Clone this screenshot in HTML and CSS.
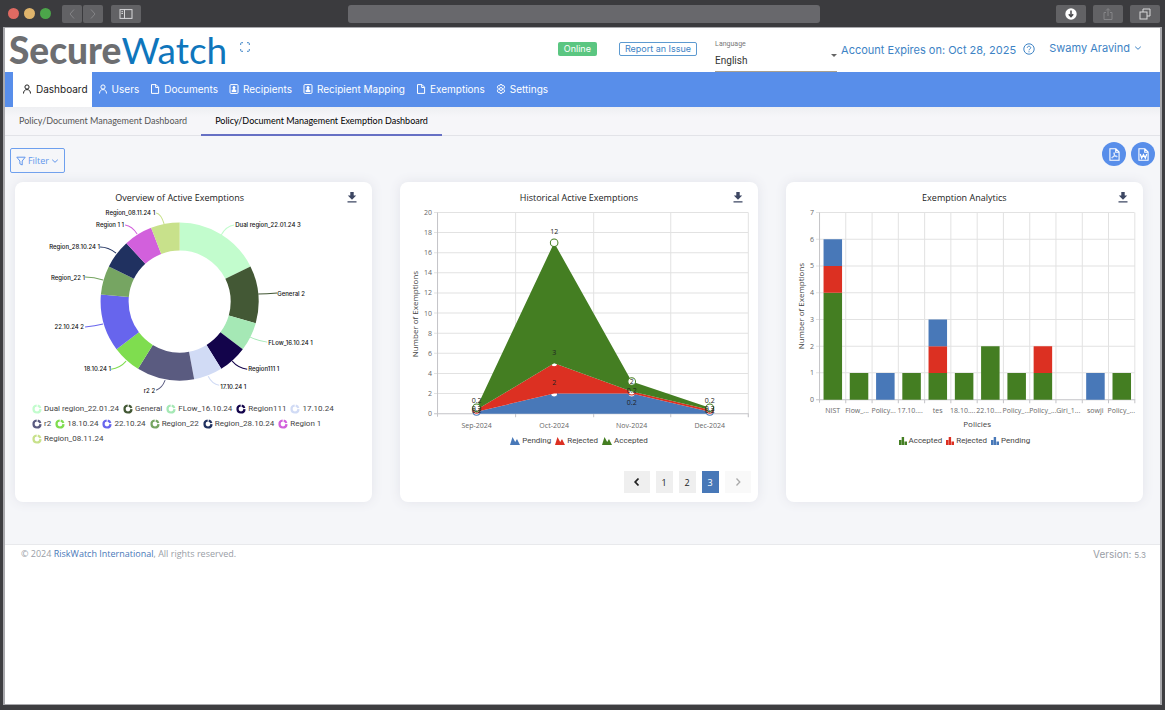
FILE: index.html
```html
<!DOCTYPE html>
<html lang="en">
<head>
<meta charset="utf-8">
<meta name="viewport" content="width=device-width, initial-scale=1">
<title>SecureWatch - Exemption Dashboard</title>
<link rel="stylesheet" href="styles.css">
</head>
<body>
<svg class="defs" width="0" height="0" aria-hidden="true">
  <defs>
    <symbol id="user" viewBox="0 0 10 10"><circle cx="5" cy="3" r="2.1"/><path d="M1.5 9.5c0-2.400 1.300-3.900 3.500-3.900s3.500 1.500 3.500 3.900"/></symbol>
    <symbol id="file" viewBox="0 0 10 10"><path d="M1.500.6h4.500l2.600 2.600v6.200h-7.100zM5.700.8v2.700h2.700"/></symbol>
    <symbol id="badge" viewBox="0 0 10 10"><rect x="1" y=".6" width="8" height="8.800" rx="1"/><circle cx="5" cy="3.600" r="1.100" fill="currentColor"/><path d="M3 7.500c0-1.300.700-2 2-2s2 .700 2 2z" fill="currentColor"/></symbol>
    <symbol id="gear" viewBox="0 0 10 10"><path d="M4 .6h2l.4 1.300 1.300-.4 1 1.600-.8 1.100v1.600l.8 1.100-1 1.600-1.300-.4L6 9.400H4l-.4-1.300-1.300.4-1-1.600.8-1.100V4.200l-.8-1.100 1-1.600 1.300.4z"/><circle cx="5" cy="5" r="1.500"/></symbol>
    <symbol id="down" viewBox="0 0 8 8"><path d="M1.200 2.700 4 5.300l2.800-2.600"/></symbol>
    <symbol id="save" viewBox="0 0 10 11"><path d="M3.300 0h3.400v3.400H9.200L5 7.800.8 3.400h2.500zM.5 9.300h9v1.200h-9z" fill="#3d4763" stroke="none"/></symbol>
    <symbol id="ring" viewBox="0 0 10 10"><path d="M5.700 1.550A3.500 3.500 0 0 1 8.350 4M8.500 5.100A3.500 3.500 0 1 1 4.700 1.500" fill="none" stroke="currentColor" stroke-width="2.200"/></symbol>
    <symbol id="area" viewBox="0 0 10 8"><path d="M0 8 2.500 0 5.200 5 7 2 10 8z" fill="currentColor"/></symbol>
    <symbol id="bars" viewBox="0 0 8 8"><path d="M0 3h2.400v5H0zM2.700 0h2.400v8H2.700zM5.500 4.500H8V8H5.500z" fill="currentColor"/></symbol>
  </defs>
</svg>

<div class="toolbar">
  <div class="tools">
    <span class="dots"><i class="dot red"></i><i class="dot amber"></i><i class="dot green"></i></span>
    <span class="pair">
      <button class="tool small dim" aria-label="Back"><svg class="icon" viewBox="0 0 10 10"><path d="M7 .5 3 5l4 4.500"/></svg></button>
      <button class="tool small dim" aria-label="Forward"><svg class="icon" viewBox="0 0 10 10"><path d="M3 .5 7 5 3 9.500"/></svg></button>
    </span>
    <button class="tool" aria-label="Sidebar"><svg class="icon wide" viewBox="0 0 14 10"><rect x="1" y=".6" width="12" height="8.800"/><path d="M5.500.6v8.800M2.400 2.700h1.600M2.400 4.500h1.600"/></svg></button>
  </div>
  <input class="address" type="text" aria-label="Address">
  <div class="tools end">
    <button class="tool" aria-label="Downloads"><svg class="icon big" viewBox="0 0 12 12"><circle cx="6" cy="6" r="5.700" fill="#fff" stroke="none"/><path d="M6 2.500v6M3.800 6.200 6 8.600l2.200-2.400" stroke="#4a4a4e" stroke-width="1.500"/></svg></button>
    <button class="tool dim" aria-label="Share"><svg class="icon big" viewBox="0 0 12 12"><path d="M4 4.500H2v7h8v-7H8M6 8V.8M4 2.600 6 .6l2 2"/></svg></button>
    <button class="tool" aria-label="Tabs"><svg class="icon big" viewBox="0 0 12 12"><rect x="1" y="4" width="7" height="7"/><path d="M4 4V1h7v7H8"/></svg></button>
  </div>
</div>

<div class="page">
  <header class="header">
    <a class="logo" href="#">Secure<span>Watch</span></a>
    <button class="plain expand" aria-label="Full screen"><svg class="icon" viewBox="0 0 10 10"><path d="M.7 3V1.500q0-.8.8-.8H3M7 .7h1.500q.8 0 .8.800V3M9.300 7v1.500q0 .8-.8.800H7M3 9.300H1.500q-.8 0-.8-.8V7"/></svg></button>
    <span class="online">Online</span>
    <button class="report">Report an Issue</button>
    <div class="language">
      <label for="lang">Language</label>
      <div class="pick"><select id="lang"><option>English</option></select></div>
    </div>
    <span class="expires">Account Expires on: Oct 28, 2025</span>
    <button class="plain help" aria-label="Help"><svg class="icon help-icon" viewBox="0 0 12 12"><circle cx="6" cy="6" r="5.200"/><path d="M4.300 4.800c0-2.200 3.400-2 3.400 0 0 1.100-1.700 1.200-1.700 2.500M6 8.300v1"/></svg></button>
    <button class="plain account">Swamy Aravind <svg class="icon chev"><use href="#down"/></svg></button>
  </header>

  <nav class="nav">
    <a class="on" href="#"><svg class="icon"><use href="#user"/></svg>Dashboard</a>
    <a href="#"><svg class="icon"><use href="#user"/></svg>Users</a>
    <a href="#"><svg class="icon"><use href="#file"/></svg>Documents</a>
    <a href="#"><svg class="icon"><use href="#badge"/></svg>Recipients</a>
    <a href="#"><svg class="icon"><use href="#badge"/></svg>Recipient Mapping</a>
    <a href="#"><svg class="icon"><use href="#file"/></svg>Exemptions</a>
    <a href="#"><svg class="icon"><use href="#gear"/></svg>Settings</a>
  </nav>

  <nav class="tabs">
    <a href="#">Policy/Document Management Dashboard</a>
    <a class="on" href="#">Policy/Document Management Exemption Dashboard</a>
  </nav>

  <main class="main">
    <div class="actions">
      <button class="filter"><svg class="icon" viewBox="0 0 10 10"><path d="M.8 1.200h8.400L6.200 5v4L3.900 7.800V5z"/></svg>Filter<svg class="icon chev"><use href="#down"/></svg></button>
      <div class="exports">
        <button aria-label="Export PDF"><svg class="doc" viewBox="0 0 12 14"><path d="M1 .8h6.500L11 4.300v8.900H1zM7.300 1v3.500h3.500"/><path d="M5.500 5c.9 0 .5 2.500-.3 4-.6 1.200-1.700 2.300-2.200 1.800-.5-.6 1.500-1.700 3-2 1.300-.3 3-.3 3 .4 0 .8-1.700.1-2.500-.8C5.600 7.400 4.800 5 5.500 5z" stroke-width=".9"/></svg></button>
        <button aria-label="Export Word"><svg class="doc" viewBox="0 0 12 14"><path d="M1 .8h6.500L11 4.300v8.900H1zM7.300 1v3.500h3.500"/><path d="M2.500 6.500 4 11 6 7.200 8 11l1.500-4.500" stroke-width="1.400"/></svg></button>
      </div>
    </div>

    <div class="cards">
      <section class="card">
        <div class="head"><h2 class="lead">Overview of Active Exemptions</h2><button class="plain save" aria-label="Download"><svg><use href="#save"/></svg></button></div>
        <svg class="chart" viewBox="0 0 357 190" role="img" aria-label="Overview of Active Exemptions">
          <g transform="rotate(-90 164.500 95.500)" fill="none" stroke-width="28">
            <circle cx="164.500" cy="95.500" r="65" pathLength="17" stroke="#c2fccd" stroke-dasharray="3 14"/>
            <circle cx="164.500" cy="95.500" r="65" pathLength="17" stroke="#435835" stroke-dasharray="2 15" stroke-dashoffset="-3"/>
            <circle cx="164.500" cy="95.500" r="65" pathLength="17" stroke="#a5e8b5" stroke-dasharray="1 16" stroke-dashoffset="-5"/>
            <circle cx="164.500" cy="95.500" r="65" pathLength="17" stroke="#13044b" stroke-dasharray="1 16" stroke-dashoffset="-6"/>
            <circle cx="164.500" cy="95.500" r="65" pathLength="17" stroke="#d1dbf5" stroke-dasharray="1 16" stroke-dashoffset="-7"/>
            <circle cx="164.500" cy="95.500" r="65" pathLength="17" stroke="#5a5b80" stroke-dasharray="2 15" stroke-dashoffset="-8"/>
            <circle cx="164.500" cy="95.500" r="65" pathLength="17" stroke="#7fdd4f" stroke-dasharray="1 16" stroke-dashoffset="-10"/>
            <circle cx="164.500" cy="95.500" r="65" pathLength="17" stroke="#6765ed" stroke-dasharray="2 15" stroke-dashoffset="-11"/>
            <circle cx="164.500" cy="95.500" r="65" pathLength="17" stroke="#76a562" stroke-dasharray="1 16" stroke-dashoffset="-13"/>
            <circle cx="164.500" cy="95.500" r="65" pathLength="17" stroke="#203160" stroke-dasharray="1 16" stroke-dashoffset="-14"/>
            <circle cx="164.500" cy="95.500" r="65" pathLength="17" stroke="#d260dc" stroke-dasharray="1 16" stroke-dashoffset="-15"/>
            <circle cx="164.500" cy="95.500" r="65" pathLength="17" stroke="#c8e18b" stroke-dasharray="1 16" stroke-dashoffset="-16"/>
          </g>
          <g fill="none" stroke-width="1">
            <path d="M206 29q5-9 13-10" stroke="#c2fccd"/><path d="M243 88q8 0 19-1" stroke="#435835"/>
            <path d="M235 131q8 4 17 5" stroke="#a5e8b5"/><path d="M217 155q6 7 15 8" stroke="#13044b"/>
            <path d="M193 170q4 8 11 9" stroke="#d1dbf5"/><path d="M150 174q-3 8-9 10" stroke="#5a5b80"/>
            <path d="M111 155q-6 7-15 8" stroke="#7fdd4f"/><path d="M88 118q-8 2-18 3" stroke="#6765ed"/>
            <path d="M88 74q-9-3-18-3" stroke="#76a562"/><path d="M101 47q-8-6-16-6" stroke="#203160"/>
            <path d="M122 28q-5-8-12-9" stroke="#d260dc"/><path d="M149 18q-3-10-8-11" stroke="#c8e18b"/>
          </g>
          <g class="callout">
            <text x="220" y="21">Dual region_22.01.24 3</text><text x="262" y="90">General 2</text>
            <text x="253" y="139">FLow_16.10.24 1</text><text x="233" y="165">Region111 1</text>
            <text x="205" y="183">17.10.24 1</text>
            <g text-anchor="end">
              <text x="140" y="187">r2 2</text><text x="96" y="165">18.10.24 1</text><text x="69" y="123">22.10.24 2</text>
              <text x="70" y="74">Region_22 1</text><text x="85" y="43">Region_28.10.24 1</text>
              <text x="109" y="21">Region 1 1</text><text x="140" y="9">Region_08.11.24 1</text>
            </g>
          </g>
        </svg>
        <ul class="legend left">
          <li><svg color="#c2fccd"><use href="#ring"/></svg>Dual region_22.01.24</li>
          <li><svg color="#435835"><use href="#ring"/></svg>General</li>
          <li><svg color="#a5e8b5"><use href="#ring"/></svg>FLow_16.10.24</li>
          <li><svg color="#13044b"><use href="#ring"/></svg>Region111</li>
          <li><svg color="#d1dbf5"><use href="#ring"/></svg>17.10.24</li>
          <li><svg color="#5a5b80"><use href="#ring"/></svg>r2</li>
          <li><svg color="#7fdd4f"><use href="#ring"/></svg>18.10.24</li>
          <li><svg color="#6765ed"><use href="#ring"/></svg>22.10.24</li>
          <li><svg color="#76a562"><use href="#ring"/></svg>Region_22</li>
          <li><svg color="#203160"><use href="#ring"/></svg>Region_28.10.24</li>
          <li><svg color="#d260dc"><use href="#ring"/></svg>Region 1</li>
          <li><svg color="#c8e18b"><use href="#ring"/></svg>Region_08.11.24</li>
        </ul>
      </section>

      <section class="card">
        <div class="head"><h2>Historical Active Exemptions</h2><button class="plain save" aria-label="Download"><svg><use href="#save"/></svg></button></div>
        <svg class="chart" viewBox="0 0 357 226" role="img" aria-label="Historical Active Exemptions">
          <path class="grid" d="M34 6.500h314M34 26.600h314M34 46.700h314M34 66.800h314M34 86.900h314M34 107h314M34 127.100h314M34 147.200h314M34 167.300h314M34 187.400h314M115.500 6.500v201M193.500 6.500v201M270.500 6.500v201M348 6.500v204"/>
          <path class="axis" d="M37.500 6.500v204M34 207.500h314M115.500 207v4M193.500 207v4M270.500 207v4M348 207v4"/>
          <path d="M76.500 205.500 154 187.400h77.500l78 18.100v2h-233z" fill="#4878b8"/>
          <g class="marks" stroke="#4878b8"><circle cx="76.500" cy="205.500" r="3.500"/><circle cx="154" cy="187.400" r="3.500"/><circle cx="231.500" cy="187.400" r="3.500"/><circle cx="309.500" cy="205.500" r="3.500"/></g>
          <path d="M76.500 203.500 154 157.200l77.500 28.200 78 18.100v2l-78-18.100H154l-77.500 18.100z" fill="#dc3022"/>
          <g class="marks" stroke="#dc3022"><circle cx="76.500" cy="203.500" r="3.500"/><circle cx="154" cy="157.200" r="3.500"/><circle cx="231.500" cy="185.400" r="3.500"/><circle cx="309.500" cy="203.500" r="3.500"/></g>
          <path d="M76.500 201.500 154 36.700l77.500 138.700 78 26.100v2l-78-18.100-77.500-28.200-77.500 46.300z" fill="#447e22"/>
          <g class="marks" stroke="#447e22"><circle cx="76.500" cy="201.500" r="3.800"/><circle cx="154" cy="36.700" r="3.800"/><circle cx="231.500" cy="175.400" r="3.800"/><circle cx="309.500" cy="201.500" r="3.800"/></g>
          <g class="values">
            <text x="76.500" y="197">0.2</text><text x="76.500" y="205">0.2</text><text x="76.500" y="207">0.2</text>
            <text x="154" y="28">12</text><text x="154" y="149">3</text><text x="154" y="179">2</text>
            <text x="231.500" y="178">2</text><text x="231.500" y="187">0.2</text><text x="231.500" y="199">0.2</text>
            <text x="309.500" y="197">0.2</text><text x="309.500" y="205">0.2</text><text x="309.500" y="207">0.2</text>
          </g>
          <g class="ticks" text-anchor="end">
            <text x="32" y="9">20</text><text x="32" y="29">18</text><text x="32" y="49">16</text><text x="32" y="69">14</text><text x="32" y="89">12</text><text x="32" y="110">10</text><text x="32" y="130">8</text><text x="32" y="150">6</text><text x="32" y="170">4</text><text x="32" y="190">2</text><text x="32" y="210">0</text>
          </g>
          <g class="ticks" text-anchor="middle"><text x="76.500" y="222">Sep-2024</text><text x="154" y="222">Oct-2024</text><text x="231.500" y="222">Nov-2024</text><text x="309.500" y="222">Dec-2024</text></g>
          <text class="name" transform="translate(18 108) rotate(-90)">Number of Exemptions</text>
        </svg>
        <ul class="legend">
          <li><svg class="wide" color="#4878b8"><use href="#area"/></svg>Pending</li>
          <li><svg class="wide" color="#dc3022"><use href="#area"/></svg>Rejected</li>
          <li><svg class="wide" color="#447e22"><use href="#area"/></svg>Accepted</li>
        </ul>
        <div class="pager">
          <button class="step" aria-label="Previous"><svg class="icon" viewBox="0 0 10 10"><path d="M6.500 1.500 3.200 5l3.300 3.500" stroke-width="1.800"/></svg></button>
          <button>1</button><button>2</button><button class="on">3</button>
          <button class="step off" aria-label="Next" disabled><svg class="icon" viewBox="0 0 10 10"><path d="M3.500 1.500 6.800 5 3.500 8.500" stroke-width="1.300"/></svg></button>
        </div>
      </section>

      <section class="card">
        <div class="head"><h2>Exemption Analytics</h2><button class="plain save" aria-label="Download"><svg><use href="#save"/></svg></button></div>
        <svg class="chart" viewBox="0 0 357 226" role="img" aria-label="Exemption Analytics">
          <path class="grid" d="M30 6.500h318M30 33.200h318M30 59.900h318M30 86.600h318M30 113.300h318M30 140h318M30 166.700h318M59.700 6.500v187M86 6.500v187M112.200 6.500v187M138.500 6.500v187M164.700 6.500v187M191 6.500v187M217.200 6.500v187M243.500 6.500v187M269.700 6.500v187M296 6.500v187M322.200 6.500v187M348.500 6.500v187"/>
          <path class="axis" d="M33.500 6.500v190M30 193.500h318M59.700 193v4M86 193v4M112.200 193v4M138.500 193v4M164.700 193v4M191 193v4M217.200 193v4M243.500 193v4M269.700 193v4M296 193v4M322.200 193v4M348.500 193v4"/>
          <path fill="#447e22" d="M37.500 86.600h18.500v106.900H37.500zM63.700 166.800h18.500v26.700H63.700zM116.200 166.800h18.500v26.700h-18.500zM142.400 166.800h18.500v26.700h-18.500zM168.700 166.800h18.500v26.700h-18.500zM194.900 140h18.500v53.500h-18.500zM221.200 166.800h18.500v26.700h-18.500zM247.400 166.800h18.500v26.700h-18.500zM326.200 166.800h18.500v26.700h-18.500z"/>
          <path fill="#dc3022" d="M37.500 59.900h18.500v26.700H37.500zM142.400 140h18.500v26.800h-18.500zM247.400 140h18.500v26.800h-18.500z"/>
          <path fill="#4878b8" d="M37.500 33.200h18.500v26.700H37.500zM90 166.800h18.500v26.700H90zM142.400 113.300h18.500v26.700h-18.500zM299.900 166.800h18.500v26.700h-18.500z"/>
          <g class="ticks" text-anchor="end"><text x="28" y="9">7</text><text x="28" y="36">6</text><text x="28" y="62">5</text><text x="28" y="89">4</text><text x="28" y="116">3</text><text x="28" y="143">2</text><text x="28" y="169">1</text><text x="28" y="196">0</text></g>
          <g class="ticks" text-anchor="middle">
            <text x="46.600" y="207">NIST</text><text x="71" y="207">Flow_...</text><text x="97.500" y="207">Policy...</text><text x="124" y="207">17.10....</text><text x="151.600" y="207">tes</text><text x="176.500" y="207">18.10....</text><text x="202.800" y="207">22.10....</text><text x="230" y="207">Policy_...</text><text x="256.600" y="207">Policy_...</text><text x="282" y="207">Giri_1...</text><text x="309" y="207">sowji</text><text x="335" y="207">Policy_...</text>
          </g>
          <text class="name" x="191" y="221">Policies</text>
          <text class="name" transform="translate(18 100) rotate(-90)">Number of Exemptions</text>
        </svg>
        <ul class="legend">
          <li><svg color="#447e22"><use href="#bars"/></svg>Accepted</li>
          <li><svg color="#dc3022"><use href="#bars"/></svg>Rejected</li>
          <li><svg color="#4878b8"><use href="#bars"/></svg>Pending</li>
        </ul>
      </section>
    </div>
  </main>

  <footer class="footer">
    <span>© 2024 <a href="#">RiskWatch International</a>, All rights reserved.</span>
    <span class="version">Version: <small>5.3</small></span>
  </footer>
</div>
</body>
</html>
```
FILE: styles.css
```css
* { box-sizing: border-box; }
body {
  margin: 0;
  min-height: 100vh;
  display: flex;
  flex-direction: column;
  background: #3e3e41;
  font-family: Inter, "Open Sans", sans-serif;
  font-size: 11px;
  color: #333;
}
button, input, select { font: inherit; color: inherit; margin: 0; padding: 0; border: 0; background: none; }
a { color: inherit; text-decoration: none; }
.defs { position: absolute; }
.icon { width: 10px; height: 10px; flex: none; fill: none; stroke: currentColor; stroke-width: 1; }
.icon.wide { width: 14px; }
.icon.big { width: 12px; height: 12px; }
.icon.chev { width: 8px; height: 8px; }
.plain { display: flex; align-items: center; }

.toolbar {
  display: grid;
  grid-template-columns: 1fr 41% 1fr;
  align-items: center;
  height: 27px;
  padding: 0 5px 0 8px;
  background: #3b3b3e;
}
.tools { display: flex; align-items: center; gap: 8px; }
.tools.end { justify-content: flex-end; gap: 7px; }
.dots { display: flex; gap: 5px; margin-right: 3px; }
.dot { width: 11px; height: 11px; border-radius: 50%; }
.red { background: #df6a62; }
.amber { background: #dfb46c; }
.green { background: #4ca54a; }
.pair { display: flex; gap: 1px; }
.tool {
  display: flex;
  align-items: center;
  justify-content: center;
  width: 30px;
  height: 18px;
  border-radius: 2px;
  background: #626265;
  color: #d8d8da;
}
.tool.small { width: 20px; }
.tool.dim { color: #858588; }
.address { width: 100%; height: 18px; border-radius: 3px; background: #68686c; color: #fff; }

.page {
  flex: 1;
  display: flex;
  flex-direction: column;
  margin: 0 3px 5px 3px;
  border: 1px solid #a9a9ad;
  border-width: 1px 2px;
  background: #fff;
}
.header {
  display: flex;
  align-items: center;
  height: 44px;
  padding: 0 18px 0 4px;
  color: #3d83c5;
}
.logo {
  font-family: Lato, sans-serif;
  font-size: 37px;
  font-weight: 900;
  line-height: 40px;
  color: #6d6e71;
}
.logo span { font-weight: 400; color: #0f76bc; }
.expand { margin: 0 auto 6px 13px; }
.online {
  margin-bottom: 2px;
  padding: 0 6px;
  border-radius: 2px;
  background: #5bc681;
  color: #fff;
  font-size: 9px;
  line-height: 14px;
}
.report {
  margin: 0 18px 2px 22px;
  padding: 0 5px;
  border: 1px solid #5d9ad0;
  border-radius: 2px;
  font-size: 9px;
  line-height: 12px;
}
.language {
  width: 122px;
  align-self: flex-end;
  border-bottom: 1px solid #a9a08f;
  font-family: Roboto, sans-serif;
  color: #333;
}
.language label { display: block; font-size: 7px; line-height: 14px; color: #777; }
.pick { display: flex; align-items: center; }
.pick::after {
  content: "";
  margin-bottom: 12px;
  border: 3px solid transparent;
  border-top-color: #666;
  border-bottom: 0;
}
.pick select { flex: 1; height: 20px; padding-bottom: 2px; appearance: none; font-size: 10px; }
.expires { margin: 0 7px 0 4px; white-space: nowrap; }
.help { margin-bottom: 2px; }
.help-icon { width: 12px; height: 12px; }
.account { gap: 4px; margin: 0 0 4px 14px; white-space: nowrap; }

.nav {
  display: flex;
  height: 35px;
  padding-left: 8px;
  background: #588eea;
  color: #fff;
  font-size: 10px;
}
.nav a { display: flex; align-items: center; gap: 4px; padding: 0 5px 1px 6px; }
.nav a.on { padding: 0 4px 1px 9px; background: #fff; color: #222; }

.tabs {
  display: flex;
  height: 29px;
  border-bottom: 1px solid #e2e3e8;
  background: linear-gradient(#eeeff2, #f6f6f9 10px);
  font-family: Lato, sans-serif;
  font-size: 9px;
  line-height: 28px;
  color: #555;
}
.tabs a { height: 29px; padding: 0 14px; white-space: nowrap; }
.tabs a.on { border-bottom: 2px solid #6670c4; color: #000; }

.main { padding: 6px 17px 42px 10px; background: #f5f6f9; }
.actions { display: flex; justify-content: space-between; margin: 0 -12px 9px -5px; }
.filter {
  display: flex;
  align-items: center;
  justify-content: center;
  gap: 2px;
  width: 55px;
  height: 25px;
  margin-top: 6px;
  border: 1px solid #6d9fee;
  border-radius: 2px;
  color: #6196ec;
  font: 9px "Open Sans", sans-serif;
}
.exports { display: flex; gap: 5px; }
.exports button {
  display: flex;
  align-items: center;
  justify-content: center;
  width: 24px;
  height: 24px;
  border-radius: 50%;
  background: #588eea;
}
.doc { width: 11px; height: 13px; fill: none; stroke: #fff; stroke-width: 1.2; }

.cards { display: grid; grid-template-columns: repeat(3, minmax(0, 1fr)); gap: 28px; }
.card {
  display: flex;
  flex-direction: column;
  min-height: 320px;
  padding-bottom: 9px;
  border-radius: 8px;
  background: #fff;
  box-shadow: 0 0 12px #e2e3ea;
  font-family: "Open Sans", sans-serif;
}
.head { display: grid; grid-template-columns: 1fr auto 1fr; align-items: center; height: 24px; padding-top: 7px; }
.head h2 { grid-column: 2; margin: 0; font-size: 9px; font-weight: 500; line-height: 17px; color: #222; }
.head .lead { padding-right: 28px; }
.save { justify-self: end; margin-right: 15px; }
.save svg { width: 10px; height: 11px; }
.chart { display: block; width: 100%; font-size: 7px; }
.grid { fill: none; stroke: #e2e2e2; stroke-width: 1; }
.axis { fill: none; stroke: #c4c4c8; stroke-width: 1; }
.marks { fill: #fff; }
.callout { font-family: Inter, sans-serif; font-size: 6px; font-weight: 500; fill: #111; }
.values { font-size: 7px; fill: #222; text-anchor: middle; }
.ticks { fill: #686868; }
.name { font-size: 8px; fill: #444; text-anchor: middle; }

.legend {
  display: flex;
  flex-wrap: wrap;
  justify-content: center;
  gap: 0 4px;
  margin: 0;
  padding: 1px 0 0;
  list-style: none;
  font-family: Roboto, sans-serif;
  font-size: 8px;
  line-height: 15px;
  color: #444;
}
.legend.left { justify-content: flex-start; padding: 5px 24px 0 17px; gap: 0 4px; }
.legend li { display: flex; align-items: center; gap: 2px; }
.legend.left svg { width: 10px; height: 10px; }
.legend svg { width: 8px; height: 8px; }
.legend svg.wide { width: 10px; }

.pager { display: flex; justify-content: flex-end; gap: 6px; margin-top: auto; padding-right: 7px; }
.pager button {
  display: flex;
  align-items: center;
  justify-content: center;
  width: 17px;
  height: 22px;
  background: #efefef;
  color: #222;
  font-size: 9px;
}
.pager .step { width: 26px; }
.pager .on { background: #4878b8; color: #fff; }
.pager .off { background: #f9f9f9; color: #aaa; }

.footer {
  display: flex;
  justify-content: space-between;
  padding: 0 14px 0 16px;
  border-top: 1px solid #e8e9ec;
  font: 9px/18px "Open Sans", sans-serif;
  color: #999ea6;
}
.footer a { color: #4878b8; }
.version { font: 10px/18px Inter, sans-serif; }
.version small { font-size: 8px; }
```
